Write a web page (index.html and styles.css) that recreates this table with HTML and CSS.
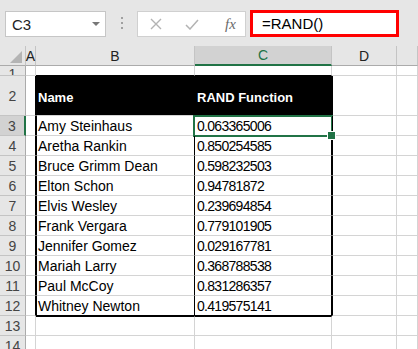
FILE: index.html
```html
<!DOCTYPE html>
<html lang="en">
<head>
  <meta charset="UTF-8">
  <meta name="viewport" content="width=device-width, initial-scale=1.0">
  <title>RAND Function</title>
  <link rel="stylesheet" href="styles.css">
</head>
<body>
  <div class="app">
    <!-- formula bar -->
    <div class="formula-bar">
      <div class="name-box">
        <span>C3</span>
        <span class="caret"></span>
      </div>
      <div class="grip"><i></i><i></i><i></i></div>
      <div class="fx-box">
        <svg class="btn-cancel" width="12" height="12" viewBox="0 0 12 12">
          <path d="M1 1 L11 11 M11 1 L1 11" stroke="#b3b3b3" stroke-width="1.4" fill="none"/>
        </svg>
        <svg class="btn-enter" width="14" height="11" viewBox="0 0 14 11">
          <path d="M1 6 L5 10 L13 1" stroke="#b3b3b3" stroke-width="1.5" fill="none"/>
        </svg>
        <span class="fx">fx</span>
      </div>
      <div class="formula">=RAND()</div>
    </div>

    <!-- worksheet -->
    <div class="sheet">
      <div class="hd corner">
        <svg width="26" height="20" viewBox="0 0 26 20"><path d="M22 5 L22 17 L10 17 Z" fill="#b4b4b4"/></svg>
      </div>
      <div class="hd">A</div>
      <div class="hd">B</div>
      <div class="hd sel">C</div>
      <div class="hd">D</div>
      <div class="hd"></div>

      <div class="rh short">1</div>
      <div class="c"></div>
      <div class="c above"></div>
      <div class="c above"></div>
      <div class="c"></div>
      <div class="c"></div>

      <div class="rh">2</div>
      <div class="c a-edge"></div>
      <div class="c b-col th">Name</div>
      <div class="c c-col th">RAND Function</div>
      <div class="c d-edge"></div>
      <div class="c"></div>

      <div class="rh sel-row">3</div>
      <div class="c a-edge"></div>
      <div class="c b-col">Amy Steinhaus</div>
      <div class="c c-col num active">0.063365006</div>
      <div class="c d-edge"></div>
      <div class="c"></div>

      <div class="rh">4</div>
      <div class="c a-edge"></div>
      <div class="c b-col">Aretha Rankin</div>
      <div class="c c-col num">0.850254585</div>
      <div class="c d-edge"></div>
      <div class="c"></div>

      <div class="rh">5</div>
      <div class="c a-edge"></div>
      <div class="c b-col">Bruce Grimm Dean</div>
      <div class="c c-col num">0.598232503</div>
      <div class="c d-edge"></div>
      <div class="c"></div>

      <div class="rh">6</div>
      <div class="c a-edge"></div>
      <div class="c b-col">Elton Schon</div>
      <div class="c c-col num">0.94781872</div>
      <div class="c d-edge"></div>
      <div class="c"></div>

      <div class="rh">7</div>
      <div class="c a-edge"></div>
      <div class="c b-col">Elvis Wesley</div>
      <div class="c c-col num">0.239694854</div>
      <div class="c d-edge"></div>
      <div class="c"></div>

      <div class="rh">8</div>
      <div class="c a-edge"></div>
      <div class="c b-col">Frank Vergara</div>
      <div class="c c-col num">0.779101905</div>
      <div class="c d-edge"></div>
      <div class="c"></div>

      <div class="rh">9</div>
      <div class="c a-edge"></div>
      <div class="c b-col">Jennifer Gomez</div>
      <div class="c c-col num">0.029167781</div>
      <div class="c d-edge"></div>
      <div class="c"></div>

      <div class="rh">10</div>
      <div class="c a-edge"></div>
      <div class="c b-col">Mariah Larry</div>
      <div class="c c-col num">0.368788538</div>
      <div class="c d-edge"></div>
      <div class="c"></div>

      <div class="rh">11</div>
      <div class="c a-edge"></div>
      <div class="c b-col">Paul McCoy</div>
      <div class="c c-col num">0.831286357</div>
      <div class="c d-edge"></div>
      <div class="c"></div>

      <div class="rh">12</div>
      <div class="c a-edge"></div>
      <div class="c b-col last">Whitney Newton</div>
      <div class="c c-col num last">0.419575141</div>
      <div class="c d-edge"></div>
      <div class="c"></div>

      <div class="rh">13</div>
      <div class="c"></div>
      <div class="c below"></div>
      <div class="c below"></div>
      <div class="c"></div>
      <div class="c"></div>

      <div class="rh">14</div>
      <div class="c"></div>
      <div class="c"></div>
      <div class="c"></div>
      <div class="c"></div>
      <div class="c"></div>
    </div>
  </div>
</body>
</html>
```

FILE: styles.css
```css
* {
  box-sizing: border-box;
}

body {
  margin: 0;
  font-family: "Liberation Sans", Arial, sans-serif;
  background: #e6e6e6;
  overflow: hidden;
}

.app {
  width: 418px;
  height: 349px;
  overflow: hidden;
}

/* formula bar */

.formula-bar {
  height: 46px;
  display: flex;
  align-items: flex-start;
  padding: 10px 0 0 5px;
}

.name-box {
  width: 101px;
  height: 26px;
  margin-top: 1px;
  background: #fff;
  border: 1px solid #c6c6c6;
  display: flex;
  align-items: center;
  justify-content: space-between;
  padding: 0 5px 0 6px;
  font-size: 15px;
  color: #222;
}

.caret {
  width: 0;
  height: 0;
  border-left: 4px solid transparent;
  border-right: 4px solid transparent;
  border-top: 4px solid #777;
}

.grip {
  width: 31px;
  height: 26px;
  display: flex;
  flex-direction: column;
  align-items: center;
  justify-content: center;
  gap: 3px;
}

.grip i {
  width: 2px;
  height: 2px;
  background: #a0a0a0;
}

.fx-box {
  width: 109px;
  height: 26px;
  margin-top: 1px;
  background: #fff;
  border: 1px solid #d0d0d0;
  display: flex;
  align-items: center;
  padding-left: 12px;
}

.btn-enter {
  margin-left: 23px;
}

.fx {
  margin-left: 26px;
  font-family: "Liberation Serif", serif;
  font-style: italic;
  font-size: 15px;
  color: #6a6a6a;
}

.formula {
  width: 149px;
  height: 27px;
  margin-left: 4px;
  background: #fff;
  border: 3px solid #ff0000;
  padding-left: 9px;
  font-size: 15px;
  line-height: 21px;
  color: #000;
}

/* worksheet grid */

.sheet {
  display: grid;
  grid-template-columns: 26px 10px 159px 137px 65px 1fr;
  grid-template-rows: 20px 10px 40px repeat(12, 20px);
  background: #fff;
}

.hd {
  background: #e6e6e6;
  border-right: 1px solid #c4c4c4;
  border-bottom: 1px solid #ababab;
  display: flex;
  align-items: center;
  justify-content: center;
  font-size: 14px;
  color: #222;
}

.hd.corner {
  padding: 0;
  display: block;
}

.hd.corner svg {
  display: block;
}

.hd.sel {
  background: #d2d2d2;
  border-bottom: 2px solid #217346;
  color: #217346;
}

.rh {
  background: #e6e6e6;
  border-right: 1px solid #ababab;
  border-bottom: 1px solid #c4c4c4;
  display: flex;
  align-items: center;
  justify-content: center;
  font-size: 14px;
  color: #444;
  overflow: hidden;
}

.rh.short {
  align-items: flex-start;
  line-height: 16px;
  padding-top: 0;
}

.rh.sel-row {
  background: #d2d2d2;
  border-right: 2px solid #217346;
}

.c {
  position: relative;
  border-right: 1px solid #d4d4d4;
  border-bottom: 1px solid #d4d4d4;
  display: flex;
  align-items: flex-end;
  padding: 0 0 1px 2px;
  font-size: 14px;
  color: #000;
  white-space: nowrap;
}

.c.num {
  letter-spacing: -0.7px;
}

/* table outline */

.a-edge {
  border-right-color: #000;
}

.b-col {
  border-left: 1px solid #000;
  border-right-color: #000;
  padding-left: 1px;
}

.c-col {
  border-right-color: #000;
}

.d-edge {
  border-left: 1px solid #000;
}

.above,
.last {
  border-bottom-color: #000;
}

.below {
  border-top: 1px solid #000;
}

.th {
  background: #000;
  color: #fff;
  font-weight: bold;
  font-size: 13px;
  align-items: center;
  padding-top: 4px;
}

/* active cell with fill handle */

.active::after {
  content: "";
  position: absolute;
  top: -1px;
  left: -2px;
  right: -2px;
  bottom: -2px;
  border: 2px solid #217346;
}

.active::before {
  content: "";
  position: absolute;
  right: -5px;
  bottom: -5px;
  width: 7px;
  height: 7px;
  background: #217346;
  border: 1px solid #fff;
  z-index: 1;
}
```
